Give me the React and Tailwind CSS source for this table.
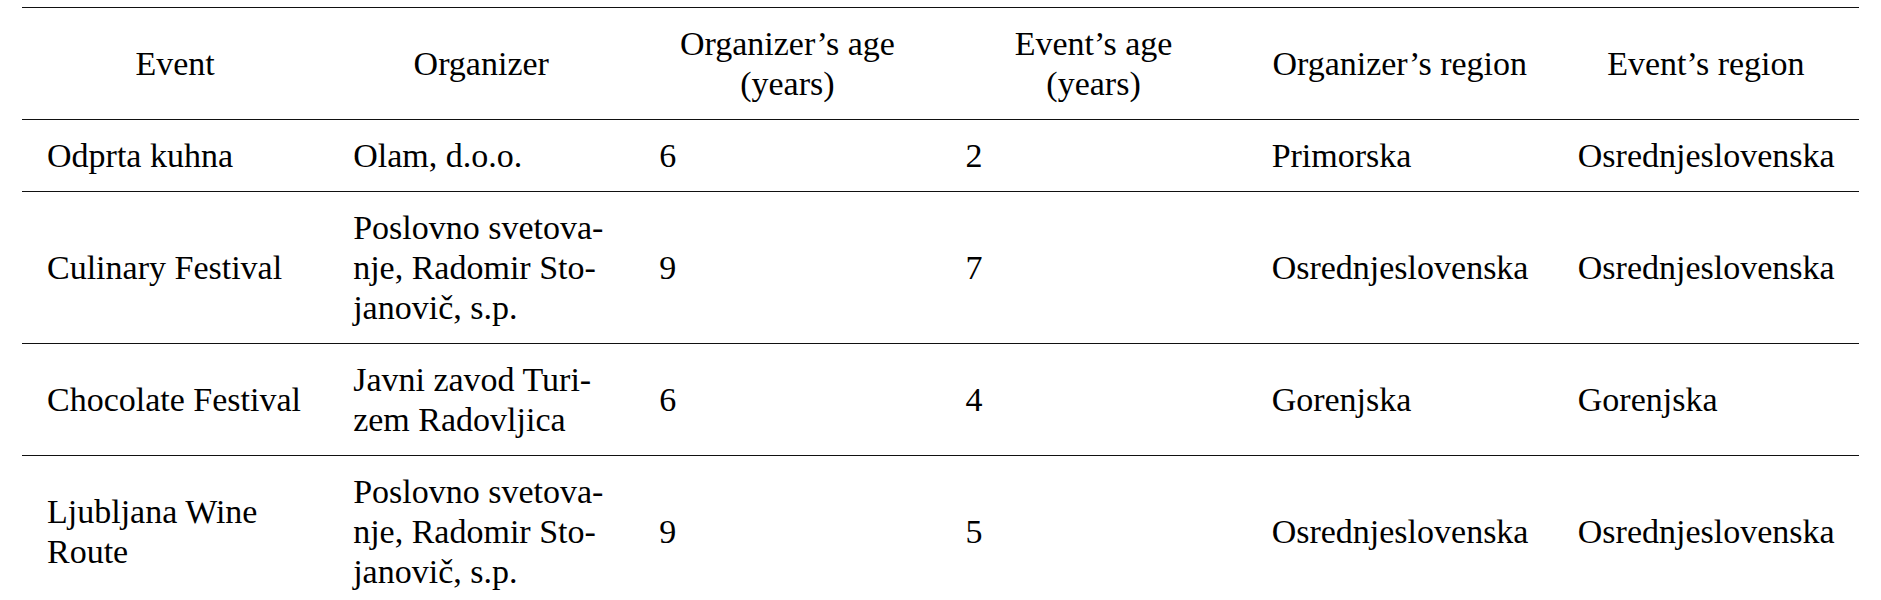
const headers = [
  ["Event"],
  ["Organizer"],
  ["Organizer’s age", "(years)"],
  ["Event’s age", "(years)"],
  ["Organizer’s region"],
  ["Event’s region"],
];

const rows = [
  [
    ["Odprta kuhna"],
    ["Olam, d.o.o."],
    ["6"],
    ["2"],
    ["Primorska"],
    ["Osrednjeslovenska"],
  ],
  [
    ["Culinary Festival"],
    ["Poslovno svetova-", "nje, Radomir Sto-", "janovič, s.p."],
    ["9"],
    ["7"],
    ["Osrednjeslovenska"],
    ["Osrednjeslovenska"],
  ],
  [
    ["Chocolate Festival"],
    ["Javni zavod Turi-", "zem Radovljica"],
    ["6"],
    ["4"],
    ["Gorenjska"],
    ["Gorenjska"],
  ],
  [
    ["Ljubljana Wine", "Route"],
    ["Poslovno svetova-", "nje, Radomir Sto-", "janovič, s.p."],
    ["9"],
    ["5"],
    ["Osrednjeslovenska"],
    ["Osrednjeslovenska"],
  ],
];

function Lines({ lines }) {
  return lines.map((line, i) => (
    <span key={i} className="block whitespace-nowrap">
      {line}
    </span>
  ));
}

export default function App() {
  return (
    <div
      className="min-h-screen bg-white px-[22px] pt-[7px] text-black"
      style={{ fontFamily: '"Liberation Serif", "Times New Roman", serif' }}
    >
      <table className="w-full table-fixed border-collapse text-[34px] leading-[40px]">
        <thead>
          <tr className="border-y border-[#111]">
            {headers.map((h, i) => (
              <th
                key={i}
                className="px-[25px] pt-[16px] pb-[15px] text-center align-middle font-normal"
              >
                <Lines lines={h} />
              </th>
            ))}
          </tr>
        </thead>
        <tbody>
          {rows.map((row, r) => (
            <tr key={r} className="border-b border-[#111]">
              {row.map((cell, c) => (
                <td
                  key={c}
                  className="px-[25px] pt-[16px] pb-[15px] text-left align-middle"
                >
                  <Lines lines={cell} />
                </td>
              ))}
            </tr>
          ))}
        </tbody>
      </table>
    </div>
  );
}
